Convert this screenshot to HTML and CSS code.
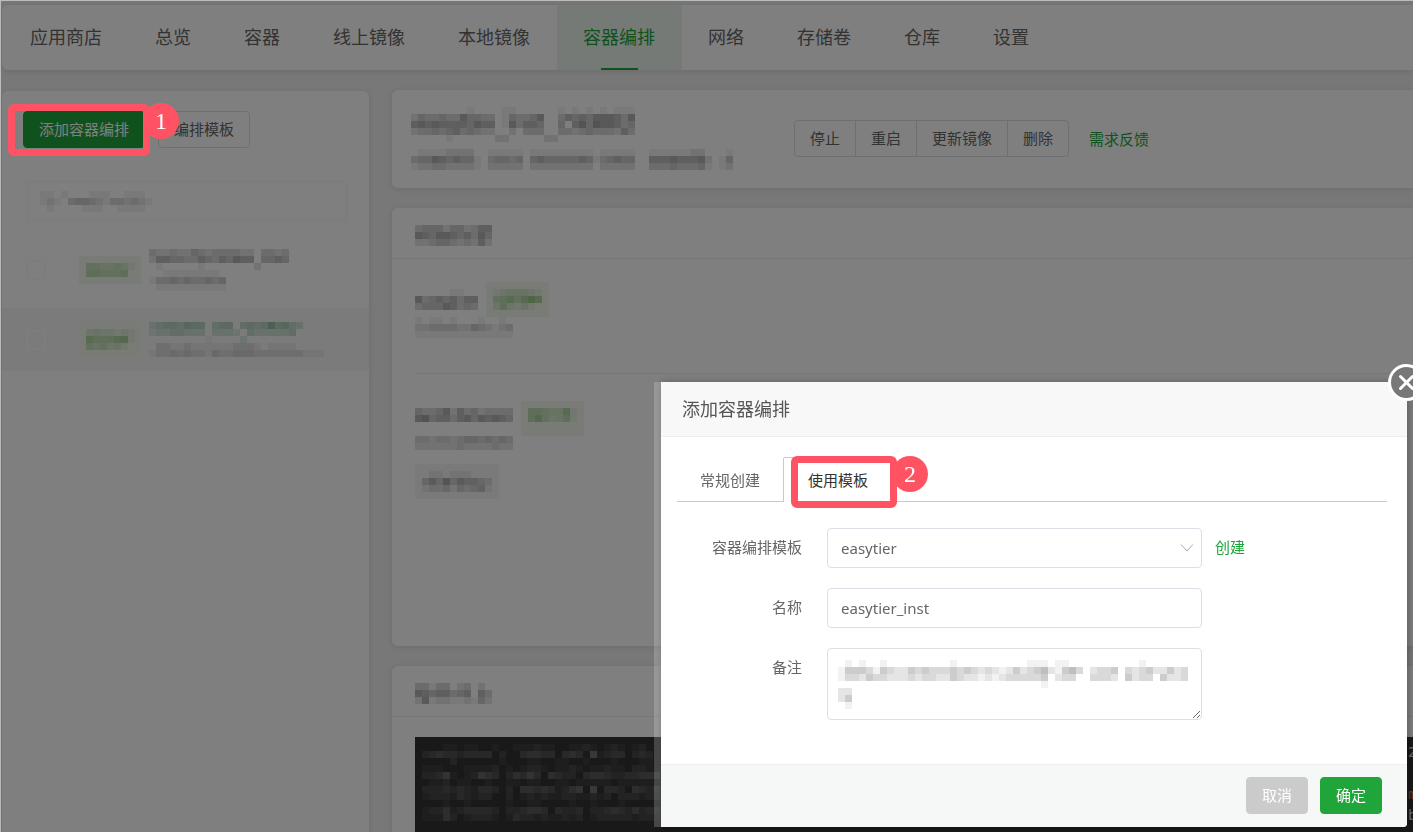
FILE: index.html
```html
<!DOCTYPE html>
<html lang="zh-CN">
<head>
  <meta charset="UTF-8" />
  <meta name="viewport" content="width=device-width, initial-scale=1.0" />
  <title>容器编排</title>
  <link rel="stylesheet" href="styles.css">
</head>
<body>
  <div class="page">
    <nav class="nav">
      <a href="#">应用商店</a>
      <a href="#">总览</a>
      <a href="#">容器</a>
      <a href="#">线上镜像</a>
      <a href="#">本地镜像</a>
      <a href="#" class="active">容器编排</a>
      <a href="#">网络</a>
      <a href="#">存储卷</a>
      <a href="#">仓库</a>
      <a href="#">设置</a>
    </nav>

    <div class="layout">
      <aside class="panel sidebar">
        <div class="toolbar">
          <button class="btn btn-green" type="button">添加容器编排</button>
          <button class="btn" type="button">编排模板</button>
        </div>
        <div class="search">
          <input type="search" aria-label="搜索" />
          <span class="mosaic" data-rows="1101000111001110,1210344321332321,0100001110011110"></span>
        </div>
        <ul class="list">
          <li class="row">
            <input type="checkbox" aria-label="选择" />
            <span class="tag"><span class="mosaic green" data-rows="4433431,5544450"></span></span>
            <div class="row-text">
              <span class="mosaic" data-rows="32232243233332203323,25544335435465504454,01000001000000020000"></span>
              <span class="mosaic" data-rows="00111111110,13343433434,01111111111"></span>
            </div>
          </li>
          <li class="row selected">
            <input type="checkbox" aria-label="选择" checked />
            <span class="tag"><span class="mosaic green" data-rows="2322121,6555671,4342310"></span></span>
            <div class="row-text">
              <span class="mosaic teal" data-rows="3455465504550454585643,2334433303332043333340,0000000010000200000000"></span>
              <span class="mosaic" data-rows="0221121111112221011110000,1223232213223332222222111"></span>
            </div>
          </li>
        </ul>
      </aside>

      <main class="content">
        <section class="panel summary">
          <div class="summary-text">
            <span class="mosaic" data-rows="00000000100001100000010101010111,24334336443301433460035454666536,56565555465501635540040574766534,23343453432200203330033234333253,00000100000022000002200000000000"></span>
            <span class="mosaic" data-rows="0111122220011111011111111101111100111111220001,3446545441034434045444445413454400555655562014,1223322221022222022222222202222200333433341012"></span>
          </div>
          <div class="btn-group">
            <button class="btn" type="button">停止</button>
            <button class="btn" type="button">重启</button>
            <button class="btn" type="button">更新镜像</button>
            <button class="btn" type="button">删除</button>
          </div>
          <a class="link" href="#">需求反馈</a>
        </section>

        <section class="panel">
          <h2 class="panel-title"><span class="mosaic" data-rows="34442442355,65466545364,22344323252"></span></h2>
          <div class="containers">
            <div class="container-item">
              <div class="line">
                <span class="mosaic" data-rows="000001100,634545355,344465343"></span>
                <span class="tag"><span class="mosaic green" data-rows="1233321,4564686,2521310"></span></span>
              </div>
              <span class="mosaic" data-rows="10110100010010,22333322432123,11111111111111"></span>
            </div>
            <div class="container-item">
              <div class="line">
                <span class="mosaic" data-rows="43346253423333,67455356465654,00000000000000"></span>
                <span class="tag"><span class="mosaic green" data-rows="5543361,5742351,0000000"></span></span>
              </div>
              <span class="mosaic" data-rows="33233234434343,22222232222322"></span>
              <div class="tag tag-grey"><span class="mosaic" data-rows="0110111000,3536354432,1223132341"></span></div>
            </div>
          </div>
        </section>

        <section class="panel">
          <h2 class="panel-title"><span class="mosaic" data-rows="33133023020,65455345053,26122112142"></span></h2>
          <div class="log">
            <div class="log-line">
              <span class="mosaic light" data-rows="00011011001001112110011210121012000,23433233330200344330343061233023200,00002000000100011001100100010001100"></span>
              <span class="log-tail">2</span>
            </div>
            <div class="log-line">
              <span class="mosaic light" data-rows="11100011112010122101121011211022100,22351012543024353043220344322334430,01120110010011011001101111101111100"></span>
              <span class="log-tail"></span>
            </div>
            <div class="log-line">
              <span class="mosaic light" data-rows="22232321332020443431245060332043230,12221321220020121211221121202221220,00010010000010011000010010001000000"></span>
              <span class="log-tail red">m</span>
            </div>
            <div class="log-line">
              <span class="mosaic light" data-rows="12241233332022344303223022343242320,11142012221013221211212012222212210,00000000000000000000000000000000000"></span>
              <span class="log-tail">b</span>
            </div>
          </div>
        </section>
      </main>
    </div>
  </div>

  <div class="overlay"></div>

  <div class="modal" role="dialog" aria-labelledby="modal-title">
    <button class="close" type="button" aria-label="关闭">
      <svg viewBox="0 0 31 31" width="31" height="31"><path d="M9.5 9.5 L21.5 21.5 M21.5 9.5 L9.5 21.5" /></svg>
    </button>
    <h3 class="modal-title" id="modal-title">添加容器编排</h3>
    <div class="modal-body">
      <div class="tabs" role="tablist">
        <button type="button" role="tab">常规创建</button>
        <button type="button" role="tab" class="on" aria-selected="true">使用模板
          <span class="mark mark-tab"></span>
          <span class="badge badge-tab">2</span>
        </button>
      </div>
      <form class="form">
        <label for="template">容器编排模板</label>
        <div class="select">
          <select id="template"><option>easytier</option></select>
          <svg viewBox="0 0 14 10" width="14" height="10"><path d="M1 1.5 L7 8 L13 1.5" /></svg>
        </div>
        <a class="link" href="#">创建</a>

        <label for="name">名称</label>
        <input id="name" type="text" value="easytier_inst" />

        <label for="remark">备注</label>
        <div class="remark">
          <textarea id="remark"></textarea>
          <span class="mosaic" data-rows="01010010000000001000000000011101100000000001000000,14443143224343334343232124234521453023340323422423,13324332223233224322121233333402330033320423304223,00000000000000000000000000000100000000000000000000"></span>
          <span class="mosaic" data-rows="22,24,01"></span>
        </div>
      </form>
    </div>
    <div class="modal-footer">
      <button class="btn btn-cancel" type="button">取消</button>
      <button class="btn btn-ok" type="button">确定</button>
    </div>
  </div>

  <div class="mark mark-add"></div>
  <span class="badge badge-add">1</span>

  <script>
    // 每个数字是一个 7px 方格的透明度
    const CELL = 7;
    const NS = 'http://www.w3.org/2000/svg';

    document.querySelectorAll('.mosaic').forEach(m => {
      const rows = m.dataset.rows.split(',');
      const width = Math.max(...rows.map(r => r.length)) * CELL;
      const svg = document.createElementNS(NS, 'svg');
      svg.setAttribute('width', width);
      svg.setAttribute('height', rows.length * CELL);
      svg.setAttribute('aria-hidden', 'true');
      rows.forEach((row, y) => {
        [...row].forEach((n, x) => {
          if (n === '0') return;
          const rect = document.createElementNS(NS, 'rect');
          rect.setAttribute('x', x * CELL);
          rect.setAttribute('y', y * CELL);
          rect.setAttribute('width', CELL);
          rect.setAttribute('height', CELL);
          rect.setAttribute('fill-opacity', n / 20);
          svg.appendChild(rect);
        });
      });
      m.appendChild(svg);
    });
  </script>
</body>
</html>
```
FILE: styles.css
```css
* {
  box-sizing: border-box;
}
body {
  margin: 0;
  height: 100vh;
  overflow: hidden;
  background: #f0f0f0;
  color: #666;
  font-family: "Noto Sans", "Noto Sans CJK SC", sans-serif;
  font-size: 15px;
}
a {
  color: inherit;
  text-decoration: none;
}
button, input, select, textarea {
  font: inherit;
  color: inherit;
}
.page {
  height: 100vh;
  overflow: hidden;
  padding: 5px 0 0 2px;
}

/* 顶部导航 */
.nav {
  display: flex;
  height: 65px;
  padding-left: 2px;
  background: #fff;
  border-radius: 6px 0 0 6px;
  box-shadow: 0 1px 6px rgba(0,0,0,0.12);
  font-size: 18px;
  line-height: 65px;
}
.nav a {
  padding: 0 27px 0 26px;
}
.nav .active {
  display: flex;
  flex-direction: column;
  align-items: center;
  background: #eaf5ec;
  color: #20a53a;
}
.nav .active::after {
  content: "";
  width: 37px;
  height: 2px;
  margin-top: -2px;
  background: #20a53a;
}

.layout {
  display: flex;
  gap: 23px;
  margin-top: 20px;
}
.panel {
  background: #fff;
  border-radius: 6px;
  box-shadow: 0 1px 6px rgba(0,0,0,0.1);
}
.btn {
  height: 37px;
  padding: 0 15px;
  border: 1px solid #dcdfe6;
  border-radius: 4px;
  background: #fff;
  line-height: 35px;
  white-space: nowrap;
}
.btn-green {
  border-color: #20a53a;
  background: #20a53a;
  color: #fff;
}
.link {
  color: #20a53a;
}

/* 马赛克 */
.mosaic {
  display: block;
  fill: #000;
}
.mosaic svg {
  display: block;
}
.mosaic.green {
  fill: #1f8a00;
}
.mosaic.teal {
  fill: #00702c;
}
.mosaic.light {
  fill: #fff;
}
.tag {
  display: inline-block;
  padding: 7px;
  background: #f0f7ec;
}
.tag-grey {
  background: #f4f4f4;
}

/* 左侧列表 */
.sidebar {
  flex: 0 0 367px;
  height: 800px;
  margin-top: 1px;
}
.toolbar {
  display: flex;
  gap: 13px;
  padding: 20px 21px 32px;
}
.search {
  position: relative;
  margin: 0 21px 16px 24px;
}
.search input {
  display: block;
  width: 100%;
  height: 42px;
  border: 3px solid #fbfbfb;
  border-radius: 4px;
  background: #fff;
}
.search .mosaic {
  position: absolute;
  left: 14px;
  top: 11px;
}
.list {
  display: grid;
  gap: 7px;
  margin: 0;
  padding: 0;
  list-style: none;
}
.row {
  display: flex;
  align-items: center;
  height: 63px;
  padding-left: 24px;
}
.row input {
  appearance: none;
  width: 20px;
  height: 20px;
  margin: 0 33px 0 0;
  border: 2px solid #fafafa;
}
.row .tag {
  width: 62px;
  margin-right: 8px;
}
.selected {
  background: #f7f7f7;
}

/* 右侧内容 */
.content {
  display: flex;
  flex: 1;
  flex-direction: column;
  gap: 20px;
  min-width: 0;
}
.content .panel {
  border-radius: 6px 0 0 6px;
}
.summary {
  display: flex;
  align-items: center;
  height: 98px;
  padding: 0 0 2px 19px;
}
.summary-text {
  display: grid;
  gap: 7px;
  width: 383px;
}
.btn-group {
  display: flex;
  margin-right: 20px;
}
.btn-group .btn {
  margin-right: -1px;
  border-radius: 0;
}
.btn-group .btn:first-child {
  border-radius: 4px 0 0 4px;
}
.btn-group .btn:last-child {
  margin-right: 0;
  border-radius: 0 4px 4px 0;
}
.panel-title {
  margin: 0;
  padding: 17px 23px 12px;
  border-bottom: 1px solid #eee;
}
.containers {
  min-height: 387px;
  padding-left: 23px;
}
.container-item {
  height: 114px;
  padding-top: 23px;
}
.container-item + .container-item {
  padding-top: 27px;
  border-top: 1px solid #eee;
}
.line {
  display: flex;
  align-items: center;
  gap: 8px;
}
.container-item .tag-grey {
  margin-top: 14px;
}

/* 日志 */
.log {
  height: 200px;
  margin: 20px 0 0 23px;
  padding: 7px 0 0 7px;
  overflow: hidden;
  background: #333;
  color: #ddd;
  font-family: "DejaVu Sans Mono", monospace;
  font-size: 14px;
}
.log-line {
  display: flex;
  justify-content: space-between;
  height: 21px;
  line-height: 16px;
}
.log-tail {
  width: 5px;
}
.red {
  color: #e06c5c;
}

.overlay {
  position: fixed;
  inset: 0;
  border: solid rgba(255,255,255,0.5);
  border-width: 1px 0 0 1px;
  background: rgba(0,0,0,0.5);
}

/* 弹窗 */
.modal {
  position: fixed;
  right: 6px;
  bottom: 5px;
  width: 746px;
  border-radius: 0 0 4px 0;
  background: #fff;
  box-shadow: -7px 0 0 rgba(255,255,255,0.2), 1px 1px 8px rgba(0,0,0,0.3);
}
.modal-title {
  margin: 0;
  padding: 0 21px;
  border-bottom: 1px solid #eee;
  background: #f8f8f8;
  color: #555;
  font-size: 18px;
  font-weight: 400;
  line-height: 54px;
}
.close {
  position: absolute;
  top: -18px;
  right: -18px;
  width: 37px;
  height: 37px;
  padding: 0;
  border: 3px solid #fff;
  border-radius: 50%;
  background: #787878;
}
.close svg {
  display: block;
  fill: none;
  stroke: #fff;
  stroke-width: 3;
  stroke-linecap: round;
}
.modal-body {
  padding: 20px 20px 44px 16px;
}
.tabs {
  display: flex;
  height: 45px;
  border-bottom: 1px solid #c9c9d6;
}
.tabs button {
  height: 45px;
  padding: 0 23px;
  border: 0;
  background: #fff;
}
.tabs button:first-child {
  height: 44px;
}
.tabs .on {
  position: relative;
  padding: 0 24px 2px;
  border: 1px solid #c9c9d6;
  border-bottom: 0;
  border-radius: 2px 2px 0 0;
  color: #333;
}
.form {
  display: grid;
  grid-template-columns: 125px 375px auto;
  gap: 20px 0;
  align-items: start;
  padding: 26px 0 0;
  margin-left: 25px;
  line-height: 38px;
}
.form label {
  grid-column: 1;
  padding-right: 25px;
  text-align: right;
}
.form .link {
  margin-left: 13px;
}
.form input, .form select, .form textarea {
  display: block;
  width: 100%;
  height: 40px;
  padding: 0 13px;
  border: 1px solid #dcdfe6;
  border-radius: 4px;
  background: #fff;
}
.form textarea {
  height: 72px;
}
.select, .remark {
  position: relative;
}
.select select {
  appearance: none;
}
.select svg {
  position: absolute;
  right: 8px;
  top: 15px;
  fill: none;
  stroke: #aaa;
}
.remark .mosaic {
  position: absolute;
  top: 12px;
  left: 11px;
}
.remark .mosaic + .mosaic {
  top: 40px;
}
.modal-footer {
  display: flex;
  justify-content: flex-end;
  gap: 12px;
  padding: 12px 25px 13px;
  border-top: 1px solid #edf0f0;
  border-radius: 0 0 4px 0;
  background: #f6f8f8;
}
.btn-cancel {
  border-color: #cbcbcb;
  background: #cbcbcb;
  color: #fff;
}
.btn-ok {
  border-color: #20a53a;
  background: #20a53a;
  color: #fff;
}

/* 步骤标注 */
.mark {
  position: absolute;
  border: 7px solid #ff5364;
  border-radius: 6px;
}
.mark-add {
  left: 8px;
  top: 104px;
  width: 142px;
  height: 52px;
}
.mark-tab {
  left: 7px;
  top: -2px;
  width: 106px;
  height: 52px;
}
.badge {
  position: absolute;
  width: 36px;
  height: 36px;
  border-radius: 50%;
  background: #ff5364;
  color: #fff;
  font-family: "Liberation Serif", serif;
  font-size: 24px;
  line-height: 36px;
  text-align: center;
}
.badge-add {
  left: 143px;
  top: 103px;
}
.badge-tab {
  left: 108px;
  top: -2px;
}
```
